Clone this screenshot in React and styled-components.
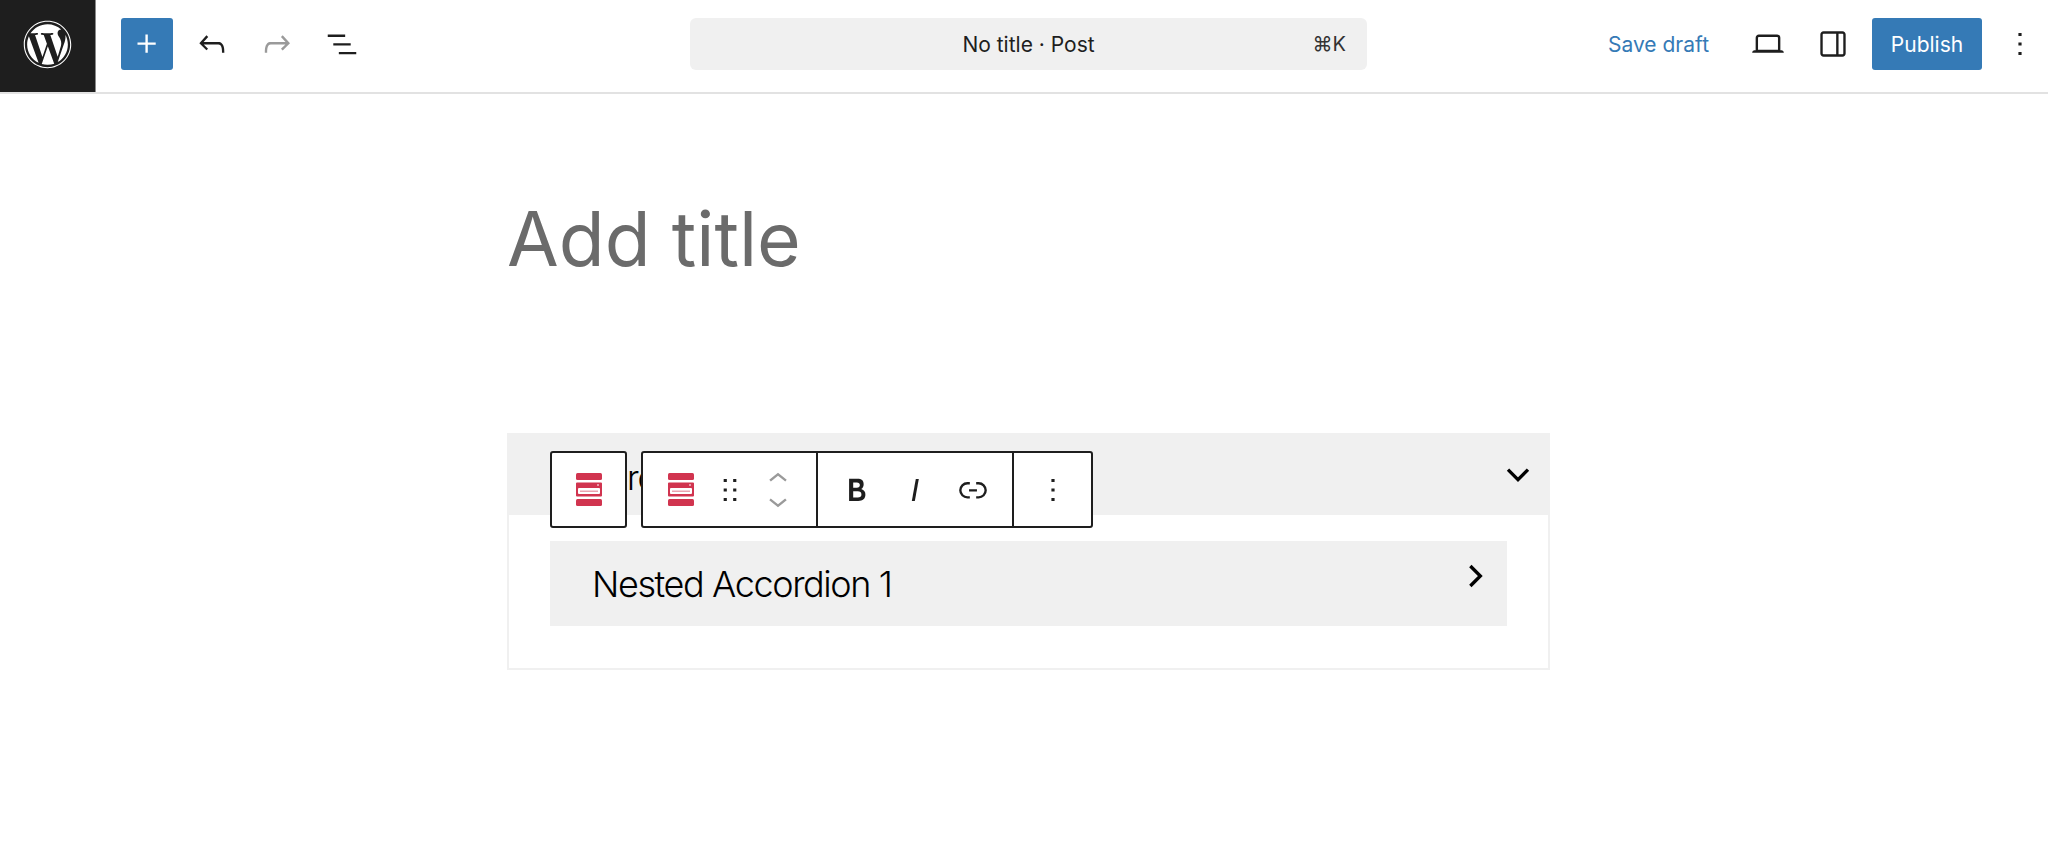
import styled, { createGlobalStyle } from "styled-components";
import { FaWordpress } from "react-icons/fa";

const GlobalStyle = createGlobalStyle`
  html, body {
    margin: 0;
    padding: 0;
    background: #fff;
    font-family: Inter, "Liberation Sans", sans-serif;
    color: #1e1e1e;
  }
`;

const Page = styled.div`
  width: 2048px;
  height: 844px;
  overflow: hidden;
`;

const Header = styled.header`
  display: flex;
  align-items: flex-start;
  height: 92px;
  border-bottom: 2px solid #e2e2e2;
`;

const LeftTools = styled.div`
  display: flex;
  align-items: flex-start;
  gap: 13px;
  width: 690px;

  & > button {
    margin-top: 18px;
  }
`;

const Logo = styled.div`
  display: flex;
  align-items: center;
  justify-content: center;
  width: 96px;
  height: 92px;
  margin-right: 12px;
  padding-bottom: 4px;
  box-sizing: border-box;
  background: #1e1e1e;
  color: #fff;
  border-right: 1px solid #8a8a8a;
`;

const IconButton = styled.button`
  display: flex;
  align-items: center;
  justify-content: center;
  width: 52px;
  height: 52px;
  padding: 0;
  border: 0;
  border-radius: 3px;
  background: ${(p) => (p.$primary ? "#357ab6" : "transparent")};
  color: ${(p) => (p.$primary ? "#fff" : p.$muted ? "#9a9a9a" : "#1e1e1e")};
`;

const CommandBar = styled.div`
  position: relative;
  display: flex;
  align-items: center;
  justify-content: center;
  width: 677px;
  height: 52px;
  margin-top: 18px;
  border-radius: 6px;
  background: #f0f0f0;
  font-size: 21px;
  color: #1e1e1e;
`;

const Shortcut = styled.span`
  position: absolute;
  right: 21px;
  font-size: 20px;
  color: #333;
`;

const RightTools = styled.div`
  display: flex;
  flex: 1;
  align-items: center;
  justify-content: flex-end;
  gap: 13px;
  padding: 18px 2px 0 0;
`;

const SaveDraft = styled.span`
  margin-right: 20px;
  font-size: 21px;
  color: #357ab6;
`;

const PublishButton = styled.button`
  width: 110px;
  height: 52px;
  margin-right: -1px;
  padding: 0;
  border: 0;
  border-radius: 3px;
  background: #357ab6;
  color: #fff;
  font-family: inherit;
  font-size: 21px;
`;

const Editor = styled.main`
  width: 1043px;
  margin-left: 507px;
`;

const Title = styled.h1`
  height: 339px;
  margin: 0;
  padding-top: 100px;
  box-sizing: border-box;
  font-size: 75px;
  line-height: 90px;
  font-weight: 400;
  color: #6b6b6b;
`;

const Accordion = styled.section`
  position: relative;
  height: 237px;
  box-sizing: border-box;
  border: 2px solid #f0f0f0;
`;

const AccordionHead = styled.div`
  display: flex;
  align-items: center;
  justify-content: space-between;
  height: 80px;
  padding: 0 14px 0 42px;
  background: #f0f0f0;
  color: #000;
`;

const AccordionTitle = styled.span`
  padding-top: 4px;
  font-size: 34px;
  font-weight: 300;
  letter-spacing: -1.2px;
`;

const NestedHead = styled.div`
  display: flex;
  align-items: center;
  justify-content: space-between;
  height: 85px;
  margin: 26px 41px 0;
  padding: 0 16px 0 42px;
  background: #f0f0f0;
  font-size: 36px;
  font-weight: 300;
  letter-spacing: -1.4px;
  color: #000;
`;

const NestedChevron = styled.span`
  display: flex;
  margin-bottom: 16px;
`;

const Toolbars = styled.div`
  position: absolute;
  top: 16px;
  left: 41px;
  display: flex;
  gap: 14px;
`;

const ToolbarGroup = styled.div`
  display: flex;
  height: 77px;
  box-sizing: border-box;
  border: 2px solid #1e1e1e;
  border-radius: 3px;
  background: #fff;
`;

const ToolbarSection = styled.div`
  display: flex;
  align-items: center;
  justify-content: ${(p) => (p.$start ? "flex-start" : "center")};
  width: ${(p) => p.$width}px;
  gap: ${(p) => p.$gap || 0}px;
  padding-left: ${(p) => (p.$start ? 25 : 0)}px;
  box-sizing: border-box;
  border-right: ${(p) => (p.$divider ? "2px solid #1e1e1e" : "0")};
`;

const MoverStack = styled.div`
  display: flex;
  flex-direction: column;
  margin-left: -7px;
  color: #9a9a9a;

  & > svg + svg {
    margin-top: -16px;
  }
`;

const Icon = ({ d, size = 38 }) => (
  <svg width={size} height={size} viewBox="0 0 24 24" fill="currentColor">
    <path d={d} />
  </svg>
);

const Chevron = ({ points }) => (
  <svg width="32" height="32" viewBox="0 0 24 24" fill="none" stroke="#000" strokeWidth="2.5">
    <polyline points={points} />
  </svg>
);

const paths = {
  plus: "M11 12.5V17.5H12.5V12.5H17.5V11H12.5V6H11V11H6V12.5H11Z",
  undo: "M18.3 11.7c-.6-.6-1.4-.9-2.3-.9H6.7l2.9-3.3-1.1-1-4.5 5L8.5 16l1-1-2.7-2.7H16c.5 0 .9.2 1.3.5 1 1 1 3.4 1 4.5v.3h1.5v-.2c0-1.5 0-4.3-1.5-5.7z",
  redo: "M15.6 6.5l-1.1 1 2.9 3.3H8c-.9 0-1.7.3-2.3.9-1.4 1.5-1.4 4.2-1.4 5.7v.2h1.5v-.3c0-1.1 0-3.5 1-4.5.3-.3.7-.5 1.3-.5h9.2L14.5 15l1.1 1.1 4.6-4.6-4.6-5z",
  list: "M3 6h11v1.5H3V6Zm3.5 5.5h11V13h-11v-1.5ZM21 17H10v1.5h11V17Z",
  laptop: "M20.5 16h-.7V8c0-1.1-.9-2-2-2H6.2c-1.1 0-2 .9-2 2v8h-.7c-.8 0-1.5.7-1.5 1.5h20c0-.8-.7-1.5-1.5-1.5zM5.7 8c0-.3.2-.5.5-.5h11.6c.3 0 .5.2.5.5v7.6H5.7V8z",
  sidebar: "M18 4H6c-1.1 0-2 .9-2 2v12c0 1.1.9 2 2 2h12c1.1 0 2-.9 2-2V6c0-1.1-.9-2-2-2zm-4 14.5H6c-.3 0-.5-.2-.5-.5V6c0-.3.2-.5.5-.5h8v13zm4.5-.5c0 .3-.2.5-.5.5h-2.5v-13H18c.3 0 .5.2.5.5v12z",
  more: "M13 19h-2v-2h2v2zm0-6h-2v-2h2v2zm0-6h-2V5h2v2z",
  drag: "M8 7h2V5H8v2zm0 6h2v-2H8v2zm0 6h2v-2H8v2zm6-14v2h2V5h-2zm0 8h2v-2h-2v2zm0 6h2v-2h-2v2z",
  up: "M6.5 12.4L12 8l5.5 4.4-.9 1.2L12 10l-4.5 3.6-1-1.2z",
  down: "M17.5 11.6L12 16l-5.5-4.4.9-1.2L12 14l4.5-3.6 1 1.2z",
  link: "M10 17.389H8.444A5.194 5.194 0 1 1 8.444 7H10v1.5H8.444a3.694 3.694 0 0 0 0 7.389H10v1.5ZM14 7h1.556a5.194 5.194 0 0 1 0 10.39H14v-1.5h1.556a3.694 3.694 0 0 0 0-7.39H14V7Zm-4.5 6h5v-1.5h-5V13Z",
  bold: "M14.7 11.3c1-.6 1.5-1.6 1.5-3 0-2.3-1.3-3.4-4-3.4H7v14h5.8c1.4 0 2.5-.3 3.3-1 .8-.7 1.2-1.7 1.2-2.9.1-1.9-.8-3.1-2.6-3.7zm-5.1-4h2.3c.6 0 1.1.1 1.4.4.3.3.5.7.5 1.2s-.2 1-.5 1.2c-.3.3-.8.4-1.4.4H9.6V7.3zm4.6 9c-.4.3-1 .4-1.7.4H9.6v-3.9h2.9c.7 0 1.3.2 1.7.5.4.3.6.8.6 1.5s-.2 1.2-.6 1.5z",
  italic: "M12.5 5L10 19h1.9l2.5-14z",
};

const BlockIcon = () => (
  <svg width="26" height="33" viewBox="0 0 26 33" fill="#d1344f">
    <rect width="26" height="7" rx="1.5" />
    <path
      fillRule="evenodd"
      d="M1 9.5h24a1 1 0 0 1 1 1v12a1 1 0 0 1-1 1H1a1 1 0 0 1-1-1v-12a1 1 0 0 1 1-1ZM3 15a1 1 0 0 0-1 1v4a1 1 0 0 0 1 1h20a1 1 0 0 0 1-1v-4a1 1 0 0 0-1-1H3Z"
    />
    <rect x="21" y="11.5" width="2" height="1" fill="#fff" />
    <rect x="4" y="17.5" width="18" height="1.5" opacity="0.45" />
    <rect y="26" width="26" height="7" rx="1.5" />
  </svg>
);

const App = () => (
  <Page>
    <GlobalStyle />
    <Header>
      <LeftTools>
        <Logo>
          <FaWordpress size={49} />
        </Logo>
        <IconButton $primary>
          <Icon d={paths.plus} />
        </IconButton>
        <IconButton>
          <Icon d={paths.undo} />
        </IconButton>
        <IconButton $muted>
          <Icon d={paths.redo} />
        </IconButton>
        <IconButton>
          <Icon d={paths.list} />
        </IconButton>
      </LeftTools>
      <CommandBar>
        No title · Post
        <Shortcut>⌘K</Shortcut>
      </CommandBar>
      <RightTools>
        <SaveDraft>Save draft</SaveDraft>
        <IconButton>
          <Icon d={paths.laptop} />
        </IconButton>
        <IconButton>
          <Icon d={paths.sidebar} />
        </IconButton>
        <PublishButton>Publish</PublishButton>
        <IconButton>
          <Icon d={paths.more} />
        </IconButton>
      </RightTools>
    </Header>
    <Editor>
      <Title>Add title</Title>
      <Accordion>
        <AccordionHead>
          <AccordionTitle>Accordion 1</AccordionTitle>
          <Chevron points="4.5 8 12 15.5 19.5 8" />
        </AccordionHead>
        <NestedHead>
          <span>Nested Accordion 1</span>
          <NestedChevron>
            <Chevron points="8.5 4.5 16 12 8.5 19.5" />
          </NestedChevron>
        </NestedHead>
        <Toolbars>
          <ToolbarGroup>
            <ToolbarSection $width={73}>
              <BlockIcon />
            </ToolbarSection>
          </ToolbarGroup>
          <ToolbarGroup>
            <ToolbarSection $width={175} $divider $start $gap={17}>
              <BlockIcon />
              <Icon d={paths.drag} />
              <MoverStack>
                <Icon d={paths.up} />
                <Icon d={paths.down} />
              </MoverStack>
            </ToolbarSection>
            <ToolbarSection $width={196} $divider $gap={20}>
              <Icon d={paths.bold} />
              <Icon d={paths.italic} />
              <Icon d={paths.link} />
            </ToolbarSection>
            <ToolbarSection $width={77}>
              <Icon d={paths.more} />
            </ToolbarSection>
          </ToolbarGroup>
        </Toolbars>
      </Accordion>
    </Editor>
  </Page>
);

export default App;
